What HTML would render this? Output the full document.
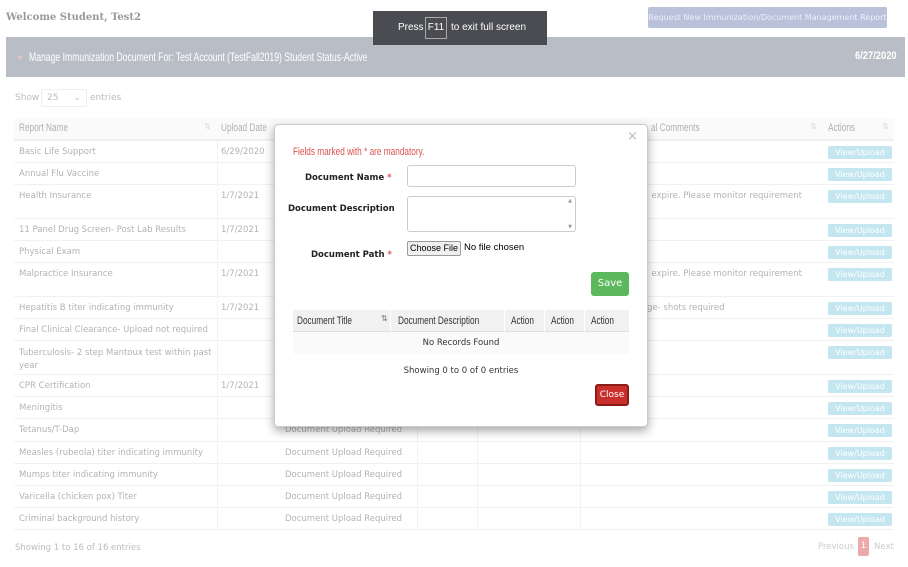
<!DOCTYPE html>
<html><head><meta charset="utf-8">
<style>
*{margin:0;padding:0;box-sizing:border-box}
body{width:908px;height:567px;overflow:hidden;background:#fff;font-family:"DejaVu Sans","Liberation Sans",sans-serif;position:relative;color:#aaa}
.a{position:absolute;white-space:nowrap}
.n{font-family:"Liberation Sans",sans-serif}
.row{position:absolute;left:14px;width:880px;border-top:1px solid #f1f1f1;font-size:8.5px;color:#b3b3b3}
.row span{position:absolute;top:6px;white-space:nowrap}
.btn{position:absolute;left:814px;top:5px;width:64px;height:13px;background:#c4e6f0;color:#fff;font-size:8px;text-align:center;line-height:13px;border-radius:2px;overflow:hidden}
.vl{position:absolute;top:0;bottom:0;border-left:1px solid #f3f3f3}
</style></head><body>
<div class="a" style="left:6px;top:12px;font-size:10px;font-weight:bold;color:#999;font-family:'DejaVu Serif',serif">Welcome Student, Test2</div>
<div class="a" style="left:648px;top:7px;width:239px;height:21px;background:#b9c2da;color:#eef;font-size:8px;text-align:center;line-height:21px;border-radius:2px;overflow:hidden">Request New Immunization/Document Management Report</div>
<div class="a" style="left:6px;top:37px;width:899px;height:40px;background:#b9bec6"></div>
<div class="a" style="left:17px;top:56px;width:0;height:0;border-left:3px solid transparent;border-right:3px solid transparent;border-top:4px solid #e6c3c3"></div>
<div class="a n" style="left:29px;top:50px;font-size:12px;color:#fff;transform:scaleX(.72);transform-origin:left">Manage Immunization Document For: Test Account (TestFall2019) Student Status-Active</div>
<div class="a n" style="left:855px;top:50px;font-size:11px;color:#fff;font-weight:bold;transform:scaleX(.85);transform-origin:left">6/27/2020</div>
<div class="a" style="left:15px;top:93px;font-size:9px;color:#bbb">Show</div>
<div class="a" style="left:41px;top:89px;width:46px;height:18px;border:1px solid #eee;font-size:9px;color:#bbb;padding:3px 5px">25 <span style="position:absolute;right:5px">⌄</span></div>
<div class="a" style="left:90px;top:93px;font-size:9px;color:#bbb">entries</div>
<div class="a" style="left:14px;top:118px;width:880px;height:22px;background:#fafafa;border-bottom:1px solid #eee"></div>
<div class="a n" style="left:19px;top:122px;font-size:11px;color:#b0b0b0;transform:scaleX(.75);transform-origin:left">Report Name</div>
<div class="a" style="left:204px;top:122px;font-size:8px;color:#ddd">⇅</div>
<div class="a n" style="left:221px;top:122px;font-size:11px;color:#b0b0b0;transform:scaleX(.75);transform-origin:left">Upload Date</div>
<div class="a n" style="left:651px;top:122px;font-size:11px;color:#b0b0b0;transform:scaleX(.75);transform-origin:left">al Comments</div>
<div class="a" style="left:810px;top:122px;font-size:8px;color:#ddd">⇅</div>
<div class="a n" style="left:828px;top:122px;font-size:11px;color:#b0b0b0;transform:scaleX(.75);transform-origin:left">Actions</div>
<div class="a" style="left:882px;top:122px;font-size:8px;color:#ddd">⇅</div>

<div class="row" style="top:140px;height:22px"><div class="vl" style="left:203px"></div><span style="left:5px">Basic Life Support</span><span style="left:207px">6/29/2020</span><div class="btn">View/Upload</div></div>
<div class="row" style="top:162px;height:22px"><div class="vl" style="left:203px"></div><span style="left:5px">Annual Flu Vaccine</span><div class="btn">View/Upload</div></div>
<div class="row" style="top:184px;height:34px"><div class="vl" style="left:203px"></div><span style="left:5px">Health Insurance</span><span style="left:207px">1/7/2021</span><span style="left:630px">ll expire. Please monitor requirement</span><div class="btn">View/Upload</div></div>
<div class="row" style="top:218px;height:22px"><div class="vl" style="left:203px"></div><span style="left:5px">11 Panel Drug Screen- Post Lab Results</span><span style="left:207px">1/7/2021</span><div class="btn">View/Upload</div></div>
<div class="row" style="top:240px;height:22px"><div class="vl" style="left:203px"></div><span style="left:5px">Physical Exam</span><div class="btn">View/Upload</div></div>
<div class="row" style="top:262px;height:34px"><div class="vl" style="left:203px"></div><span style="left:5px">Malpractice Insurance</span><span style="left:207px">1/7/2021</span><span style="left:630px">ll expire. Please monitor requirement</span><div class="btn">View/Upload</div></div>
<div class="row" style="top:296px;height:22px"><div class="vl" style="left:203px"></div><span style="left:5px">Hepatitis B titer indicating immunity</span><span style="left:207px">1/7/2021</span><span style="left:633px">ge- shots required</span><div class="btn">View/Upload</div></div>
<div class="row" style="top:318px;height:22px"><div class="vl" style="left:203px"></div><span style="left:5px">Final Clinical Clearance- Upload not required</span><div class="btn">View/Upload</div></div>
<div class="row" style="top:340px;height:34px"><div class="vl" style="left:203px"></div><span style="left:5px;line-height:13px">Tuberculosis- 2 step Mantoux test within past<br>year</span><div class="btn">View/Upload</div></div>
<div class="row" style="top:374px;height:22px"><div class="vl" style="left:203px"></div><span style="left:5px">CPR Certification</span><span style="left:207px">1/7/2021</span><div class="btn">View/Upload</div></div>
<div class="row" style="top:396px;height:22px"><div class="vl" style="left:203px"></div><span style="left:5px">Meningitis</span><div class="btn">View/Upload</div></div>
<div class="row" style="top:418px;height:23px"><div class="vl" style="left:203px"></div><div class="vl" style="left:403px"></div><div class="vl" style="left:463px"></div><div class="vl" style="left:566px"></div><span style="left:5px">Tetanus/T-Dap</span><span style="left:271px">Document Upload Required</span><div class="btn">View/Upload</div></div>
<div class="row" style="top:441px;height:22px"><div class="vl" style="left:203px"></div><div class="vl" style="left:403px"></div><div class="vl" style="left:463px"></div><div class="vl" style="left:566px"></div><span style="left:5px">Measles (rubeola) titer indicating immunity</span><span style="left:271px">Document Upload Required</span><div class="btn">View/Upload</div></div>
<div class="row" style="top:463px;height:22px"><div class="vl" style="left:203px"></div><div class="vl" style="left:403px"></div><div class="vl" style="left:463px"></div><div class="vl" style="left:566px"></div><span style="left:5px">Mumps titer indicating immunity</span><span style="left:271px">Document Upload Required</span><div class="btn">View/Upload</div></div>
<div class="row" style="top:485px;height:22px"><div class="vl" style="left:203px"></div><div class="vl" style="left:403px"></div><div class="vl" style="left:463px"></div><div class="vl" style="left:566px"></div><span style="left:5px">Varicella (chicken pox) Titer</span><span style="left:271px">Document Upload Required</span><div class="btn">View/Upload</div></div>
<div class="row" style="top:507px;height:23px;border-bottom:1px solid #f1f1f1"><div class="vl" style="left:203px"></div><div class="vl" style="left:403px"></div><div class="vl" style="left:463px"></div><div class="vl" style="left:566px"></div><span style="left:5px">Criminal background history</span><span style="left:271px">Document Upload Required</span><div class="btn">View/Upload</div></div>

<div class="a" style="left:15px;top:543px;font-size:8.5px;color:#bbb">Showing 1 to 16 of 16 entries</div>
<div class="a" style="left:818px;top:542px;font-size:8.5px;color:#ccc">Previous</div>
<div class="a" style="left:858px;top:537px;width:11px;height:19px;background:#eba9a9;color:#fff;font-size:9px;text-align:center;line-height:19px;border-radius:2px">1</div>
<div class="a" style="left:874px;top:542px;font-size:8.5px;color:#ccc">Next</div>

<div class="a" style="left:373px;top:11px;width:174px;height:34px;background:#4a4c52;color:#fff;font-size:10px;font-family:'Liberation Sans',sans-serif"><span style="position:absolute;left:25px;top:11px">Press</span><span style="position:absolute;left:52px;top:6px;width:22px;height:22px;border:1px solid #aaa;text-align:center;line-height:20px">F11</span><span style="position:absolute;left:78px;top:11px">to exit full screen</span></div>

<div class="a" style="left:274px;top:124px;width:374px;height:303px;background:#fff;border:1px solid #ccc;border-radius:4px;box-shadow:0 4px 10px rgba(0,0,0,.35)">
<div class="a" style="left:352px;top:4px;font-size:13px;color:#bbb">×</div>
<div class="a n" style="left:18px;top:21px;font-size:11px;color:#d9534f;transform:scaleX(.75);transform-origin:left">Fields marked with * are mandatory.</div>
<div class="a" style="left:30px;top:48px;font-size:8.5px;font-weight:bold;color:#222">Document Name <span style="color:#d9534f">*</span></div>
<div class="a" style="left:132px;top:40px;width:169px;height:22px;border:1px solid #ccc;border-radius:3px"></div>
<div class="a" style="left:13px;top:79px;font-size:8.5px;font-weight:bold;color:#222">Document Description</div>
<div class="a" style="left:132px;top:71px;width:169px;height:36px;border:1px solid #ccc;border-radius:3px"><span style="position:absolute;right:3px;top:1px;font-size:5px;color:#999">▲</span><span style="position:absolute;right:3px;bottom:1px;font-size:5px;color:#999">▼</span></div>
<div class="a" style="left:36px;top:125px;font-size:8.5px;font-weight:bold;color:#222">Document Path <span style="color:#d9534f">*</span></div>
<div class="a" style="left:132px;top:116px;width:54px;height:15px;border:1px solid #999;background:#efefef;border-radius:2px;font-size:9px;color:#000;text-align:center;line-height:13px;font-family:'Liberation Sans',sans-serif">Choose File</div>
<div class="a" style="left:189px;top:117px;font-size:9.5px;color:#000;font-family:'Liberation Sans',sans-serif">No file chosen</div>
<div class="a" style="left:316px;top:147px;width:38px;height:24px;background:#5cb85c;color:#fff;border-radius:3px;font-size:10px;text-align:center;line-height:24px">Save</div>
<div class="a" style="left:18px;top:185px;width:336px;height:44px;background:#fafafa"></div>
<div class="a" style="left:18px;top:185px;width:336px;height:22px;background:#f1f1f1;border-bottom:1px solid #ddd"></div>
<div class="a" style="left:115px;top:185px;height:22px;border-left:1px solid #fff"></div>
<div class="a" style="left:229px;top:185px;height:22px;border-left:1px solid #fff"></div>
<div class="a" style="left:269px;top:185px;height:22px;border-left:1px solid #fff"></div>
<div class="a" style="left:309px;top:185px;height:22px;border-left:1px solid #fff"></div>
<div class="a n" style="left:22px;top:190px;font-size:11px;color:#333;transform:scaleX(.75);transform-origin:left">Document Title</div>
<div class="a" style="left:106px;top:189px;font-size:8px;color:#777">⇅</div>
<div class="a n" style="left:123px;top:190px;font-size:11px;color:#333;transform:scaleX(.75);transform-origin:left">Document Description</div>
<div class="a n" style="left:236px;top:190px;font-size:11px;color:#333;transform:scaleX(.75);transform-origin:left">Action</div>
<div class="a n" style="left:276px;top:190px;font-size:11px;color:#333;transform:scaleX(.75);transform-origin:left">Action</div>
<div class="a n" style="left:316px;top:190px;font-size:11px;color:#333;transform:scaleX(.75);transform-origin:left">Action</div>
<div class="a" style="left:18px;top:213px;width:336px;text-align:center;font-size:8.5px;color:#333">No Records Found</div>
<div class="a" style="left:18px;top:241px;width:336px;text-align:center;font-size:8.5px;color:#333">Showing 0 to 0 of 0 entries</div>
<div class="a" style="left:320px;top:259px;width:34px;height:22px;background:#c9302c;border:2px solid #8b1c1a;color:#fff;border-radius:3px;font-size:9px;text-align:center;line-height:18px">Close</div>
</div>
</body></html>
